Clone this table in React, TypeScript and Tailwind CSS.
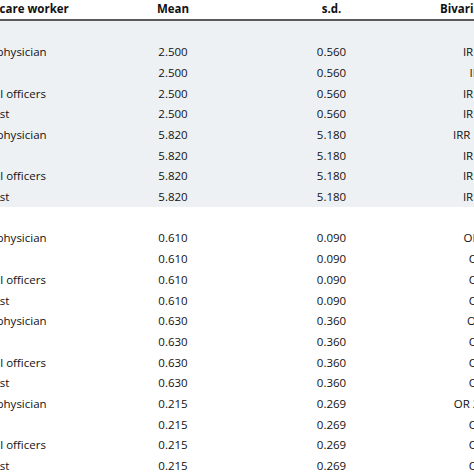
import React from "react";

type Row = { label: string; mean: string; sd: string; biv: string };

const GROUP_A: Row[] = [
  { label: "Family physician", mean: "2.500", sd: "0.560", biv: "IRR 1.02 (0.98–1.06)" },
  { label: "Nurse", mean: "2.500", sd: "0.560", biv: "IRR 1.0 (0.9–1.06)" },
  { label: "Hospital officers", mean: "2.500", sd: "0.560", biv: "IRR 1.02 (0.98–1.06)" },
  { label: "Therapist", mean: "2.500", sd: "0.560", biv: "IRR 1.02 (0.98–1.06)" },
  { label: "Family physician", mean: "5.820", sd: "5.180", biv: "IRR 1.021 (0.978–1.066)" },
  { label: "Nurse", mean: "5.820", sd: "5.180", biv: "IRR 1.02 (0.98–1.06)" },
  { label: "Hospital officers", mean: "5.820", sd: "5.180", biv: "IRR 1.02 (0.98–1.06)" },
  { label: "Therapist", mean: "5.820", sd: "5.180", biv: "IRR 1.02 (0.98–1.06)" },
];

const GROUP_B: Row[] = [
  { label: "Family physician", mean: "0.610", sd: "0.090", biv: "OR 1.05 (0.92–1.19)" },
  { label: "Nurse", mean: "0.610", sd: "0.090", biv: "Coef. 0.12 (0.043)" },
  { label: "Hospital officers", mean: "0.610", sd: "0.090", biv: "Coef. 0.12 (0.043)" },
  { label: "Therapist", mean: "0.610", sd: "0.090", biv: "Coef. 0.12 (0.043)" },
  { label: "Family physician", mean: "0.630", sd: "0.360", biv: "OR 1.5 (0.92–1.19)" },
  { label: "Nurse", mean: "0.630", sd: "0.360", biv: "Coef. 0.12 (0.043)" },
  { label: "Hospital officers", mean: "0.630", sd: "0.360", biv: "Coef. 0.12 (0.043)" },
  { label: "Therapist", mean: "0.630", sd: "0.360", biv: "Coef. 0.12 (0.043)" },
  { label: "Family physician", mean: "0.215", sd: "0.269", biv: "OR 2.143 (1.312–3.498)" },
  { label: "Nurse", mean: "0.215", sd: "0.269", biv: "Coef. 0.12 (0.043)" },
  { label: "Hospital officers", mean: "0.215", sd: "0.269", biv: "Coef. 0.12 (0.043)" },
  { label: "Therapist", mean: "0.215", sd: "0.269", biv: "Coef. 0.12 (0.043)" },
];

const cols = "grid grid-cols-[171px_86px_231px_136px] items-center";

function DataRow({ r }: { r?: Row }) {
  return (
    <div className={`${cols} h-[20.7px]`}>
      <span className="whitespace-nowrap">{r?.label}</span>
      <span className="text-center">{r?.mean}</span>
      <span className="text-center">{r?.sd}</span>
      <span className="flex justify-center whitespace-nowrap">{r?.biv}</span>
    </div>
  );
}

export default function App() {
  return (
    <div className="w-[474px] h-[474px] overflow-hidden bg-white text-[#111] text-[11.5px] leading-none font-['Open_Sans',sans-serif]">
      <div className="-ml-[41px] w-[624px]">
        <div className={`${cols} h-[21px] pb-[2px] border-b-2 border-[#5a5a5a] font-bold`}>
          <span className="pl-[2px] whitespace-nowrap">Healthcare worker</span>
          <span className="text-center">Mean</span>
          <span className="text-center">s.d.</span>
          <span className="flex justify-center whitespace-nowrap">Bivariate analysis (95% CI)</span>
        </div>
        <div className="bg-[#eef1f4]">
          <DataRow />
          {GROUP_A.map((r, i) => (
            <DataRow key={i} r={r} />
          ))}
        </div>
        <DataRow />
        {GROUP_B.map((r, i) => (
          <DataRow key={i} r={r} />
        ))}
      </div>
    </div>
  );
}
